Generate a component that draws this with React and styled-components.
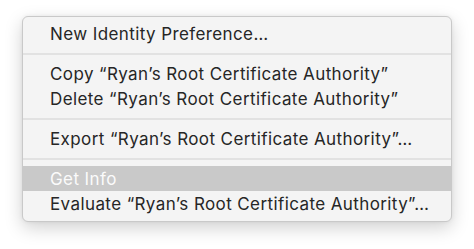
import React from "react";
import styled, { createGlobalStyle } from "styled-components";

const GlobalStyle = createGlobalStyle`
  html, body {
    margin: 0;
    padding: 0;
    background: #ffffff;
  }
  body {
    font-family: "Inter", "Liberation Sans", sans-serif;
  }
`;

const sections = [
  [{ label: "New Identity Preference…" }],
  [
    { label: "Copy “Ryan’s Root Certificate Authority”" },
    { label: "Delete “Ryan’s Root Certificate Authority”" },
  ],
  [{ label: "Export “Ryan’s Root Certificate Authority”…" }],
  [
    { label: "Get Info", active: true },
    { label: "Evaluate “Ryan’s Root Certificate Authority”…" },
  ],
];

export default function App() {
  return (
    <>
      <GlobalStyle />
      <Page>
        <Menu>
          {sections.map((items, i) => (
            <React.Fragment key={i}>
              {i > 0 && <Separator />}
              {items.map((item) => (
                <Item key={item.label} $active={item.active}>
                  {item.label}
                </Item>
              ))}
            </React.Fragment>
          ))}
        </Menu>
      </Page>
    </>
  );
}

const Page = styled.div`
  width: 474px;
  height: 249px;
  padding: 16px 0 0 22px;
  box-sizing: border-box;
`;

const Menu = styled.div`
  width: 430px;
  box-sizing: border-box;
  padding: 4px 0 5px;
  background: #f4f4f4;
  border: 1px solid #c9c9c9;
  border-radius: 6px;
  box-shadow: 0 6px 18px rgba(0, 0, 0, 0.18), 0 0 4px rgba(0, 0, 0, 0.06);
`;

const Item = styled.div`
  height: 25px;
  display: flex;
  align-items: center;
  padding-left: 27px;
  font-size: 17px;
  letter-spacing: 0.4px;
  color: ${(p) => (p.$active ? "#fbfbfb" : "#262626")};
  background: ${(p) => (p.$active ? "#c9c9c9" : "transparent")};
  white-space: nowrap;
`;

const Separator = styled.div`
  height: 15px;
  display: flex;
  align-items: center;

  &::after {
    content: "";
    flex: 1;
    height: 2px;
    background: #e2e2e2;
  }
`;
